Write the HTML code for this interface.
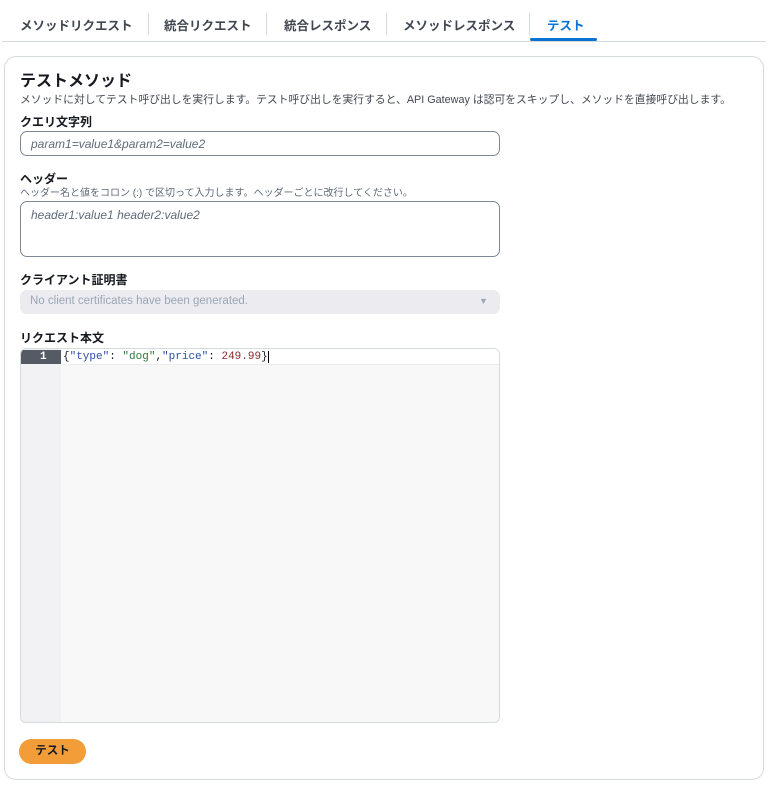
<!DOCTYPE html>
<html><head><meta charset="utf-8"><style>
*{margin:0;padding:0;box-sizing:border-box}
body{width:768px;height:790px;background:#fff;font-family:"Liberation Sans","Noto Sans CJK JP",sans-serif;color:#16191f;position:relative;overflow:hidden}
.a{position:absolute;white-space:nowrap}
.tab{position:absolute;top:15px;font-size:12.5px;font-weight:bold;color:#414750}
.sep{position:absolute;top:13px;width:1px;height:22px;background:#d5dbdb}
.lbl{font-size:12px;font-weight:bold}
.inp{position:absolute;left:20px;width:480px;border:1px solid #7d8998;border-radius:7px;background:#fff}
.ph{font-style:italic;color:#5f6b7a;font-size:12px}
</style></head><body>
<div class="tab" style="left:20px">メソッドリクエスト</div>
<div class="sep" style="left:148px"></div>
<div class="tab" style="left:164px">統合リクエスト</div>
<div class="sep" style="left:266px"></div>
<div class="tab" style="left:284px">統合レスポンス</div>
<div class="sep" style="left:386px"></div>
<div class="tab" style="left:403px">メソッドレスポンス</div>
<div class="sep" style="left:529px"></div>
<div class="tab" style="left:547px;color:#0972d3">テスト</div>
<div class="a" style="left:2px;top:41px;width:764px;height:1px;background:#d5dbdb"></div>
<div class="a" style="left:530px;top:38px;width:67px;height:3px;background:#0972d3;border-radius:2px"></div>

<div class="a" style="left:4px;top:56px;width:760px;height:724px;border:1px solid #d5dbdb;border-radius:12px"></div>
<div class="a" style="left:20px;top:67px;font-size:16px;font-weight:bold">テストメソッド</div>
<div class="a" style="left:20px;top:91px;font-size:10.8px;color:#414750">メソッドに対してテスト呼び出しを実行します。テスト呼び出しを実行すると、API Gateway は認可をスキップし、メソッドを直接呼び出します。</div>
<div class="a lbl" style="left:20px;top:113px">クエリ文字列</div>
<div class="inp" style="top:131px;height:25px"><span class="a ph" style="left:10px;top:5px">param1=value1&amp;param2=value2</span></div>
<div class="a lbl" style="left:20px;top:170px">ヘッダー</div>
<div class="a" style="left:20px;top:184px;font-size:10px;color:#5f6b7a">ヘッダー名と値をコロン (:) で区切って入力します。ヘッダーごとに改行してください。</div>
<div class="inp" style="top:201px;height:56px"><span class="a ph" style="left:10px;top:6px">header1:value1 header2:value2</span></div>
<div class="a lbl" style="left:20px;top:271px">クライアント証明書</div>
<div class="a" style="left:20px;top:290px;width:480px;height:24px;background:#ebebf0;border-radius:7px"><span class="a" style="left:10px;top:5px;font-size:11.5px;color:#9ba7b6">No client certificates have been generated.</span><span class="a" style="left:459px;top:6px;font-size:9px;color:#9ba7b6">▼</span></div>
<div class="a lbl" style="left:20px;top:329px">リクエスト本文</div>
<div class="a" style="left:20px;top:348px;width:480px;height:375px;border:1px solid #d5dbdb;border-radius:6px;background:#f8f8f8;overflow:hidden">
<div class="a" style="left:0;top:0;width:40px;height:375px;background:#f2f2f5"></div>
<div class="a" style="left:0;top:1px;width:40px;height:14px;background:#545b64"></div>
<div class="a" style="left:19px;top:2px;font-size:11px;line-height:12px;color:#fff;font-family:'Liberation Mono',monospace;font-weight:bold">1</div>
<div class="a" style="left:40px;top:0;width:440px;height:16px;background:#fff;border-bottom:1px solid #e9ebed"></div>
<div class="a" style="left:42px;top:1px;font-family:'Liberation Mono',monospace;font-size:11px;line-height:14px;color:#16191f">{<span style="color:#2a4fa8">"type"</span>: <span style="color:#2f7a3a">"dog"</span>,<span style="color:#2a4fa8">"price"</span>: <span style="color:#8b2b2b">249.99</span>}<span style="border-left:1px solid #000"></span></div>
</div>
<div class="a" style="left:19px;top:739px;width:67px;height:25px;background:#f29d38;border-radius:13px;font-size:11.5px;font-weight:bold;text-align:center;line-height:25px">テスト</div>
</body></html>
